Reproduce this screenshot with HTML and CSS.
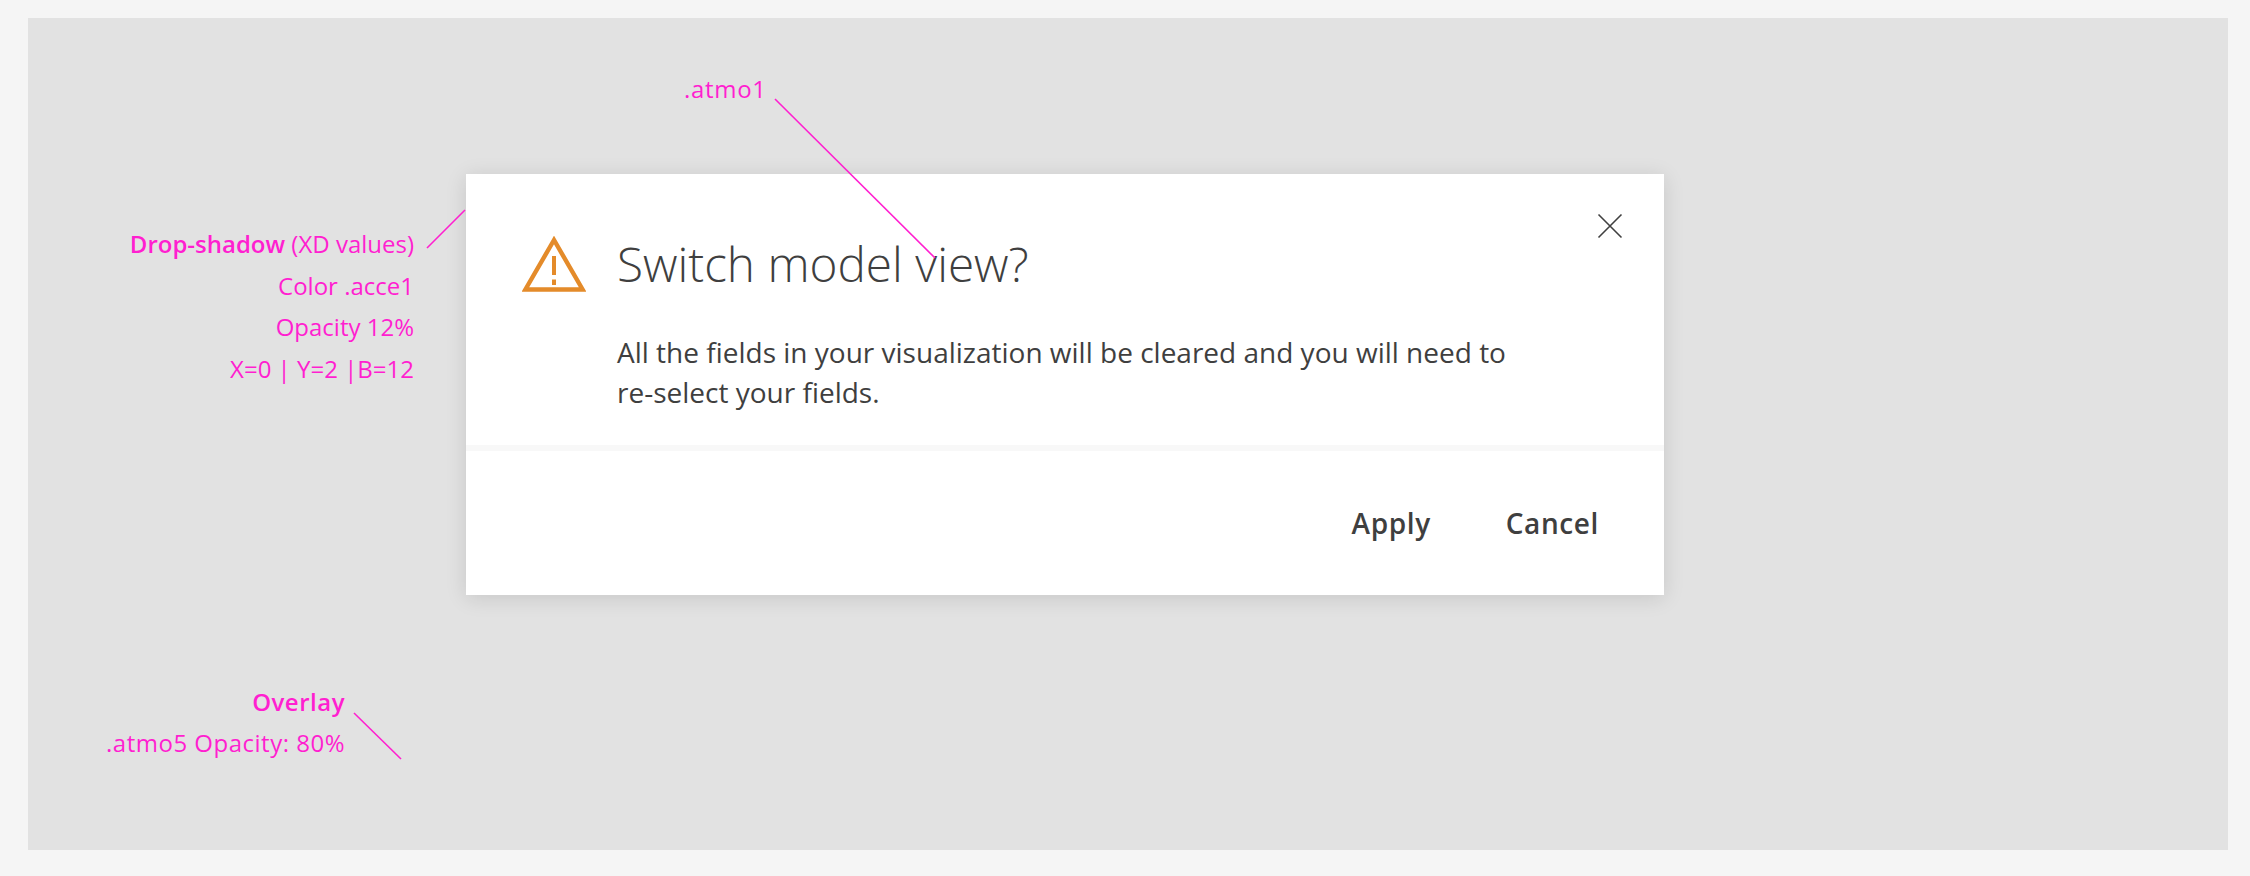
FILE: index.html
```html
<!DOCTYPE html>
<html lang="en">
<head>
<meta charset="utf-8">
<title>Switch model view</title>
<link rel="stylesheet" href="styles.css">
</head>
<body>
<main class="overlay">
  <section class="dialog">
    <header class="dialog-head">
      <svg class="warn-icon" width="64" height="56" viewBox="0 0 64 56">
        <path class="warn-tri" d="M32 4 L3.4 53.5 H60.6 Z"/>
        <path class="warn-mark" d="M32 20 V39 M32 43.5 V49"/>
      </svg>
      <h1 class="dialog-title">Switch model view?</h1>
      <svg class="close-icon" width="26" height="26" viewBox="0 0 26 26">
        <path d="M1.5 1.5 L24.5 24.5 M24.5 1.5 L1.5 24.5"/>
      </svg>
    </header>
    <p class="dialog-body">All the fields in your visualization will be cleared and you will need to<br>re-select your fields.</p>
    <div class="divider"></div>
    <footer class="dialog-actions">
      <span class="action">Apply</span>
      <span class="action">Cancel</span>
    </footer>
  </section>

  <div class="note note-shadow">
    <div><b>Drop-shadow</b> (XD values)</div>
    <div>Color .acce1</div>
    <div>Opacity 12%</div>
    <div>X=0 | Y=2 |B=12</div>
  </div>
  <div class="note note-atmo">.atmo1</div>
  <div class="note note-overlay">
    <div><b>Overlay</b></div>
    <div>.atmo5 Opacity: 80%</div>
  </div>

  <svg class="leaders" width="2250" height="876" viewBox="0 0 2250 876">
    <path d="M427 248 L465 210"/>
    <path d="M775 99 L935 258"/>
    <path d="M354 713 L401 759"/>
  </svg>
</main>
</body>
</html>
```
FILE: styles.css
```css
* { box-sizing: border-box; }
html, body { margin: 0; height: 100%; }
body {
  background: #f5f5f5;
  font-family: "Open Sans", "Noto Sans", sans-serif;
  padding: 18px 22px 26px 28px;
  overflow: hidden;
}
.overlay {
  background: #e2e2e2;
  height: 832px;
  padding: 156px 0 0 438px;
}
.dialog {
  width: 1198px;
  height: 421px;
  background: #fff;
  box-shadow: 0 3px 20px rgba(0, 0, 0, 0.12);
  color: #3f3f3f;
  display: flex;
  flex-direction: column;
  position: relative;
}
.dialog-head {
  display: flex;
  align-items: center;
  height: 120px;
  padding: 60px 0 0 56px;
}
.warn-icon { flex: none; }
.warn-tri { fill: none; stroke: #e48b2a; stroke-width: 4.4; }
.warn-mark { fill: none; stroke: #e48b2a; stroke-width: 4; }
.dialog-title {
  margin: 0 0 0 31px;
  font-size: 47.7px;
  font-weight: 300;
  line-height: 58px;
}
.close-icon {
  position: absolute;
  top: 39px;
  right: 41px;
}
.close-icon path { fill: none; stroke: #404040; stroke-width: 1.6; }
.dialog-body {
  margin: 38px 0 0 151px;
  font-size: 28px;
  font-weight: 400;
  line-height: 40px;
}
.divider {
  height: 6px;
  background: #f8f8f8;
  margin-top: 33px;
}
.dialog-actions {
  display: flex;
  justify-content: flex-end;
  gap: 75px;
  padding: 52px 65px 0 0;
}
.action {
  font-size: 28px;
  font-weight: 600;
  line-height: 40px;
  letter-spacing: 0.6px;
}
.note {
  position: absolute;
  color: #ff1fd0;
  font-size: 24px;
  text-align: right;
  white-space: nowrap;
}
.note b { font-weight: 600; }
.note-shadow { right: 1836px; top: 223px; line-height: 41.7px; }
.note-atmo { left: 684px; top: 73px; line-height: 32px; letter-spacing: 0.7px; }
.note-overlay { right: 1905px; top: 681px; line-height: 41px; letter-spacing: 0.5px; }
.leaders { position: absolute; left: 0; top: 0; pointer-events: none; }
.leaders path { fill: none; stroke: #ff1fd0; stroke-width: 1.6; }
```
